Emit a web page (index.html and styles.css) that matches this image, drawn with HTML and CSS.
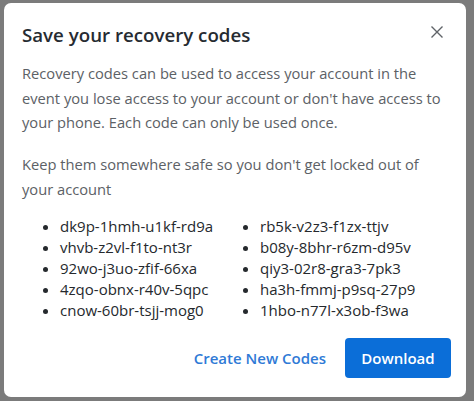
FILE: index.html
```html
<!DOCTYPE html>
<html>
<head>
    <meta name="viewport" content="width=device-width, initial-scale=1" charset="utf-8">
    <title>Recovery codes</title>
    <link rel="stylesheet" href="styles.css">
</head>
<body>
<div class="modal">
    <div class="modal-head">
        <h1>Save your recovery codes</h1>
        <button class="close" type="button" aria-label="Close">
            <svg width="14" height="14" viewBox="0 0 14 14">
                <path d="M1.5 1.5L12.5 12.5M12.5 1.5L1.5 12.5" stroke="#5f6368" stroke-width="1.4" fill="none"/>
            </svg>
        </button>
    </div>
    <p>Recovery codes can be used to access your account in the event you lose access to your account or don't have access to your phone. Each code can only be used once.</p>
    <p>Keep them somewhere safe so you don't get locked out of your account</p>
    <div class="codes">
        <ul>
            <li>dk9p-1hmh-u1kf-rd9a</li>
            <li>vhvb-z2vl-f1to-nt3r</li>
            <li>92wo-j3uo-zfif-66xa</li>
            <li>4zqo-obnx-r40v-5qpc</li>
            <li>cnow-60br-tsjj-mog0</li>
        </ul>
        <ul>
            <li>rb5k-v2z3-f1zx-ttjv</li>
            <li>b08y-8bhr-r6zm-d95v</li>
            <li>qiy3-02r8-gra3-7pk3</li>
            <li>ha3h-fmmj-p9sq-27p9</li>
            <li>1hbo-n77l-x3ob-f3wa</li>
        </ul>
    </div>
    <div class="actions">
        <button class="link-btn" type="button">Create New Codes</button>
        <button class="primary-btn" type="button">Download</button>
    </div>
</div>
</body>
</html>
```

FILE: styles.css
```css
body {
    margin: 0;
    background-color: #7b7b7b;
    font-family: "Open Sans", "Noto Sans", sans-serif;
}

.modal {
    width: 462px;
    height: 394px;
    box-sizing: border-box;
    margin: 3px 0 0 4px;
    padding: 18px 22px 0 18px;
    background-color: white;
    border-radius: 7px;
}

.modal-head {
    display: flex;
    justify-content: space-between;
    align-items: flex-start;
}

h1 {
    margin: 0;
    font-size: 18.7px;
    font-weight: 600;
    color: #262b31;
    line-height: 28px;
}

.close {
    background: none;
    border: none;
    padding: 0;
    margin-top: 4px;
    cursor: pointer;
    display: flex;
}

p {
    margin: 12px 0 0 0;
    font-size: 14.7px;
    line-height: 24.5px;
    color: #5c6166;
}

p + p {
    margin-top: 17.5px;
}

.codes {
    display: flex;
    margin-top: 15px;
}

ul {
    margin: 0;
    padding-left: 38px;
    width: 162px;
    font-size: 15px;
    line-height: 21px;
    color: #25292d;
}

.actions {
    display: flex;
    justify-content: flex-end;
    align-items: center;
    margin-top: 17px;
    margin-right: -7px;
    gap: 19px;
}

.link-btn {
    background: none;
    border: none;
    padding: 0;
    font-family: inherit;
    font-size: 15px;
    font-weight: 600;
    color: #2f7ad6;
    cursor: pointer;
}

.primary-btn {
    background-color: #0b6ed8;
    color: white;
    border: none;
    border-radius: 4px;
    width: 106px;
    height: 40px;
    font-family: inherit;
    font-size: 15px;
    font-weight: 600;
    cursor: pointer;
}
```
